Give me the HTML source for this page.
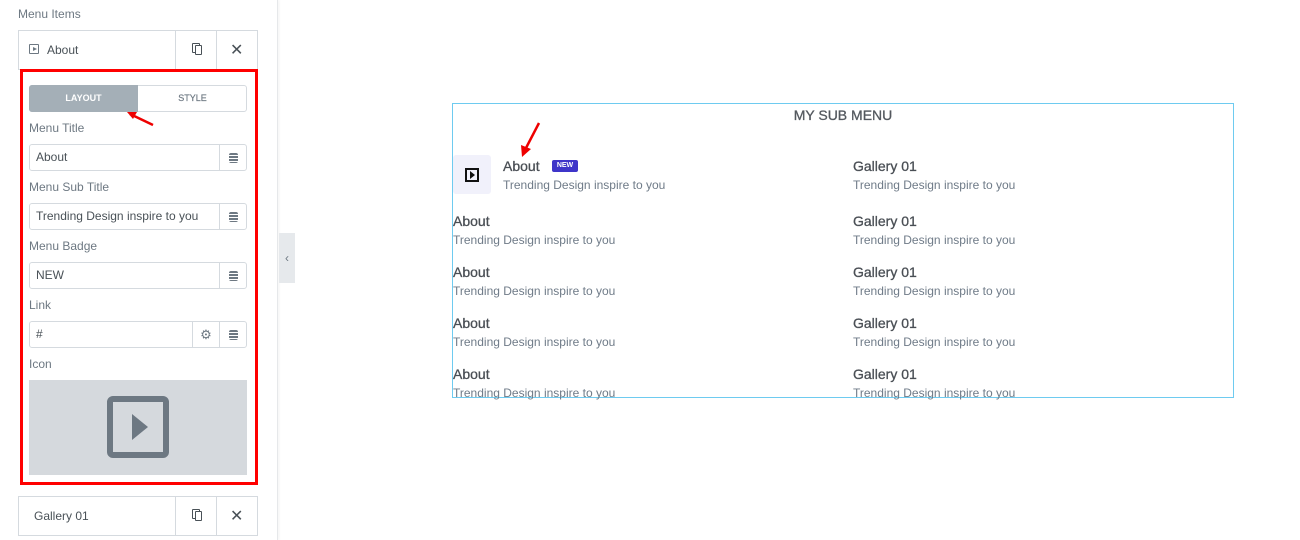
<!DOCTYPE html>
<html><head><style>
*{box-sizing:border-box;margin:0;padding:0}
body{width:1300px;height:540px;position:relative;background:#fff;font-family:"Liberation Sans",Arial,sans-serif;overflow:hidden}
.a{position:absolute}
.side{left:0;top:0;width:278px;height:540px;background:#fff;border-right:1px solid #e6e8ea;box-shadow:1px 0 3px rgba(0,0,0,.05)}
.lbl{font-size:12px;color:#6d7882}
.box{border:1px solid #d5dadf}
.inp{border:1px solid #d5dadf;border-radius:3px;height:27px;font-size:12px;color:#495157;padding-left:6px;line-height:25px;left:29px;width:218px}
.inp .ic{position:absolute;right:0;top:0;width:27px;height:25px;border-left:1px solid #d5dadf;display:flex;align-items:center;justify-content:center}
.db{width:9px;height:10px;border-radius:2px;background:repeating-linear-gradient(#6d7882 0 2px,#fff 2px 3px)}
.ttl{font-size:14px;color:#4a4f55;-webkit-text-stroke:0.3px #4a4f55}
.sub{font-size:12px;color:#6f7b88}
</style></head><body>
<div class="a side"></div>
<div class="a lbl" style="left:18px;top:7px">Menu Items</div>
<div class="a box" style="left:18px;top:30px;width:240px;height:40px"></div>
<div class="a" style="left:175px;top:30px;width:1px;height:40px;background:#d5dadf"></div>
<div class="a" style="left:216px;top:30px;width:1px;height:40px;background:#d5dadf"></div>
<div class="a" style="left:29px;top:44px;width:10px;height:10px;border:1.5px solid #6d7882;border-radius:1px"></div>
<div class="a" style="left:33px;top:47px;border-left:4px solid #6d7882;border-top:2.5px solid transparent;border-bottom:2.5px solid transparent"></div>
<div class="a" style="left:47px;top:43px;font-size:12px;color:#495157">About</div>
<div class="a" style="left:192px;top:43px;width:8px;height:10px;border:1.3px solid #495157;border-radius:1px;background:#fff"></div>
<div class="a" style="left:195px;top:45px;width:7px;height:10px;border:1.3px solid #495157;border-radius:1px;background:#fff"></div>
<div class="a" style="left:230px;top:40px;font-size:16px;color:#495157">✕</div>
<div class="a" style="left:20px;top:69px;width:238px;height:416px;border:3px solid #f00"></div>
<div class="a" style="left:29px;top:85px;width:218px;height:27px;border:1px solid #d5dadf;border-radius:3px"></div>
<div class="a" style="left:29px;top:85px;width:109px;height:27px;background:#a4afb7;border-radius:3px 0 0 3px;color:#fff;font-size:9px;font-weight:bold;text-align:center;line-height:27px">LAYOUT</div>
<div class="a" style="left:138px;top:85px;width:109px;height:27px;color:#6d7882;font-size:9px;text-align:center;line-height:27px;-webkit-text-stroke:0.2px #6d7882">STYLE</div>
<svg class="a" style="left:125px;top:108px" width="32" height="20"><path d="M28 17 L5 6" stroke="#e00" stroke-width="2.5"/><path d="M2 4 L12 4 L8 11z" fill="#e00"/></svg>
<div class="a lbl" style="left:29px;top:121px">Menu Title</div>
<div class="a inp" style="top:144px">About<div class="ic"><div class="db"></div></div></div>
<div class="a lbl" style="left:29px;top:180px">Menu Sub Title</div>
<div class="a inp" style="top:203px">Trending Design inspire to you<div class="ic"><div class="db"></div></div></div>
<div class="a lbl" style="left:29px;top:239px">Menu Badge</div>
<div class="a inp" style="top:262px">NEW<div class="ic"><div class="db"></div></div></div>
<div class="a lbl" style="left:29px;top:298px">Link</div>
<div class="a inp" style="top:321px">#<div class="ic"><div class="db"></div></div><div class="ic" style="right:27px;color:#6d7882;font-size:13px">⚙</div></div>
<div class="a lbl" style="left:29px;top:357px">Icon</div>
<div class="a" style="left:29px;top:380px;width:218px;height:95px;background:#d5d9dd"></div>
<div class="a" style="left:107px;top:396px;width:62px;height:62px;border:6px solid #6d7882;border-radius:6px"></div>
<div class="a" style="left:132px;top:414px;border-left:16px solid #6d7882;border-top:13px solid transparent;border-bottom:13px solid transparent"></div>
<div class="a box" style="left:18px;top:496px;width:240px;height:40px"></div>
<div class="a" style="left:175px;top:496px;width:1px;height:40px;background:#d5dadf"></div>
<div class="a" style="left:216px;top:496px;width:1px;height:40px;background:#d5dadf"></div>
<div class="a" style="left:34px;top:509px;font-size:12px;color:#495157">Gallery 01</div>
<div class="a" style="left:192px;top:509px;width:8px;height:10px;border:1.3px solid #495157;border-radius:1px;background:#fff"></div>
<div class="a" style="left:195px;top:511px;width:7px;height:10px;border:1.3px solid #495157;border-radius:1px;background:#fff"></div>
<div class="a" style="left:230px;top:506px;font-size:16px;color:#495157">✕</div>
<div class="a" style="left:279px;top:233px;width:16px;height:50px;background:#e6e9ec;color:#6d7882;font-size:12px;text-align:center;line-height:50px">‹</div>

<div class="a" style="left:452px;top:103px;width:782px;height:295px;border:1px solid #6ecbf0"></div>
<div class="a" style="left:452px;top:107px;width:782px;text-align:center;font-size:14px;color:#54595f;-webkit-text-stroke:0.3px #54595f">MY SUB MENU</div>
<svg class="a" style="left:518px;top:120px" width="26" height="40"><path d="M21 3 L8 28" stroke="#e00" stroke-width="2.5"/><path d="M3 25 L13 29 L4 37z" fill="#e00"/></svg>
<div class="a" style="left:453px;top:155px;width:38px;height:39px;background:#f1f1fb;border-radius:3px"></div>
<div class="a" style="left:465px;top:168px;width:14px;height:14px;border:2px solid #111"></div>
<div class="a" style="left:470px;top:171px;border-left:5px solid #111;border-top:4px solid transparent;border-bottom:4px solid transparent"></div>
<div class="a ttl" style="left:503px;top:158px">About</div>
<div class="a" style="left:552px;top:160px;width:26px;height:12px;background:#3e35c9;border-radius:2px;color:#fff;font-size:7px;font-weight:bold;text-align:center;line-height:12px">NEW</div>
<div class="a sub" style="left:503px;top:178px">Trending Design inspire to you</div>
<div class="a ttl" style="left:853px;top:158px">Gallery 01</div>
<div class="a sub" style="left:853px;top:178px">Trending Design inspire to you</div>

<div class="a ttl" style="left:453px;top:213px">About</div>
<div class="a sub" style="left:453px;top:233px">Trending Design inspire to you</div>
<div class="a ttl" style="left:853px;top:213px">Gallery 01</div>
<div class="a sub" style="left:853px;top:233px">Trending Design inspire to you</div>
<div class="a ttl" style="left:453px;top:264px">About</div>
<div class="a sub" style="left:453px;top:284px">Trending Design inspire to you</div>
<div class="a ttl" style="left:853px;top:264px">Gallery 01</div>
<div class="a sub" style="left:853px;top:284px">Trending Design inspire to you</div>
<div class="a ttl" style="left:453px;top:315px">About</div>
<div class="a sub" style="left:453px;top:335px">Trending Design inspire to you</div>
<div class="a ttl" style="left:853px;top:315px">Gallery 01</div>
<div class="a sub" style="left:853px;top:335px">Trending Design inspire to you</div>
<div class="a ttl" style="left:453px;top:366px">About</div>
<div class="a sub" style="left:453px;top:386px">Trending Design inspire to you</div>
<div class="a ttl" style="left:853px;top:366px">Gallery 01</div>
<div class="a sub" style="left:853px;top:386px">Trending Design inspire to you</div>
</body></html>
